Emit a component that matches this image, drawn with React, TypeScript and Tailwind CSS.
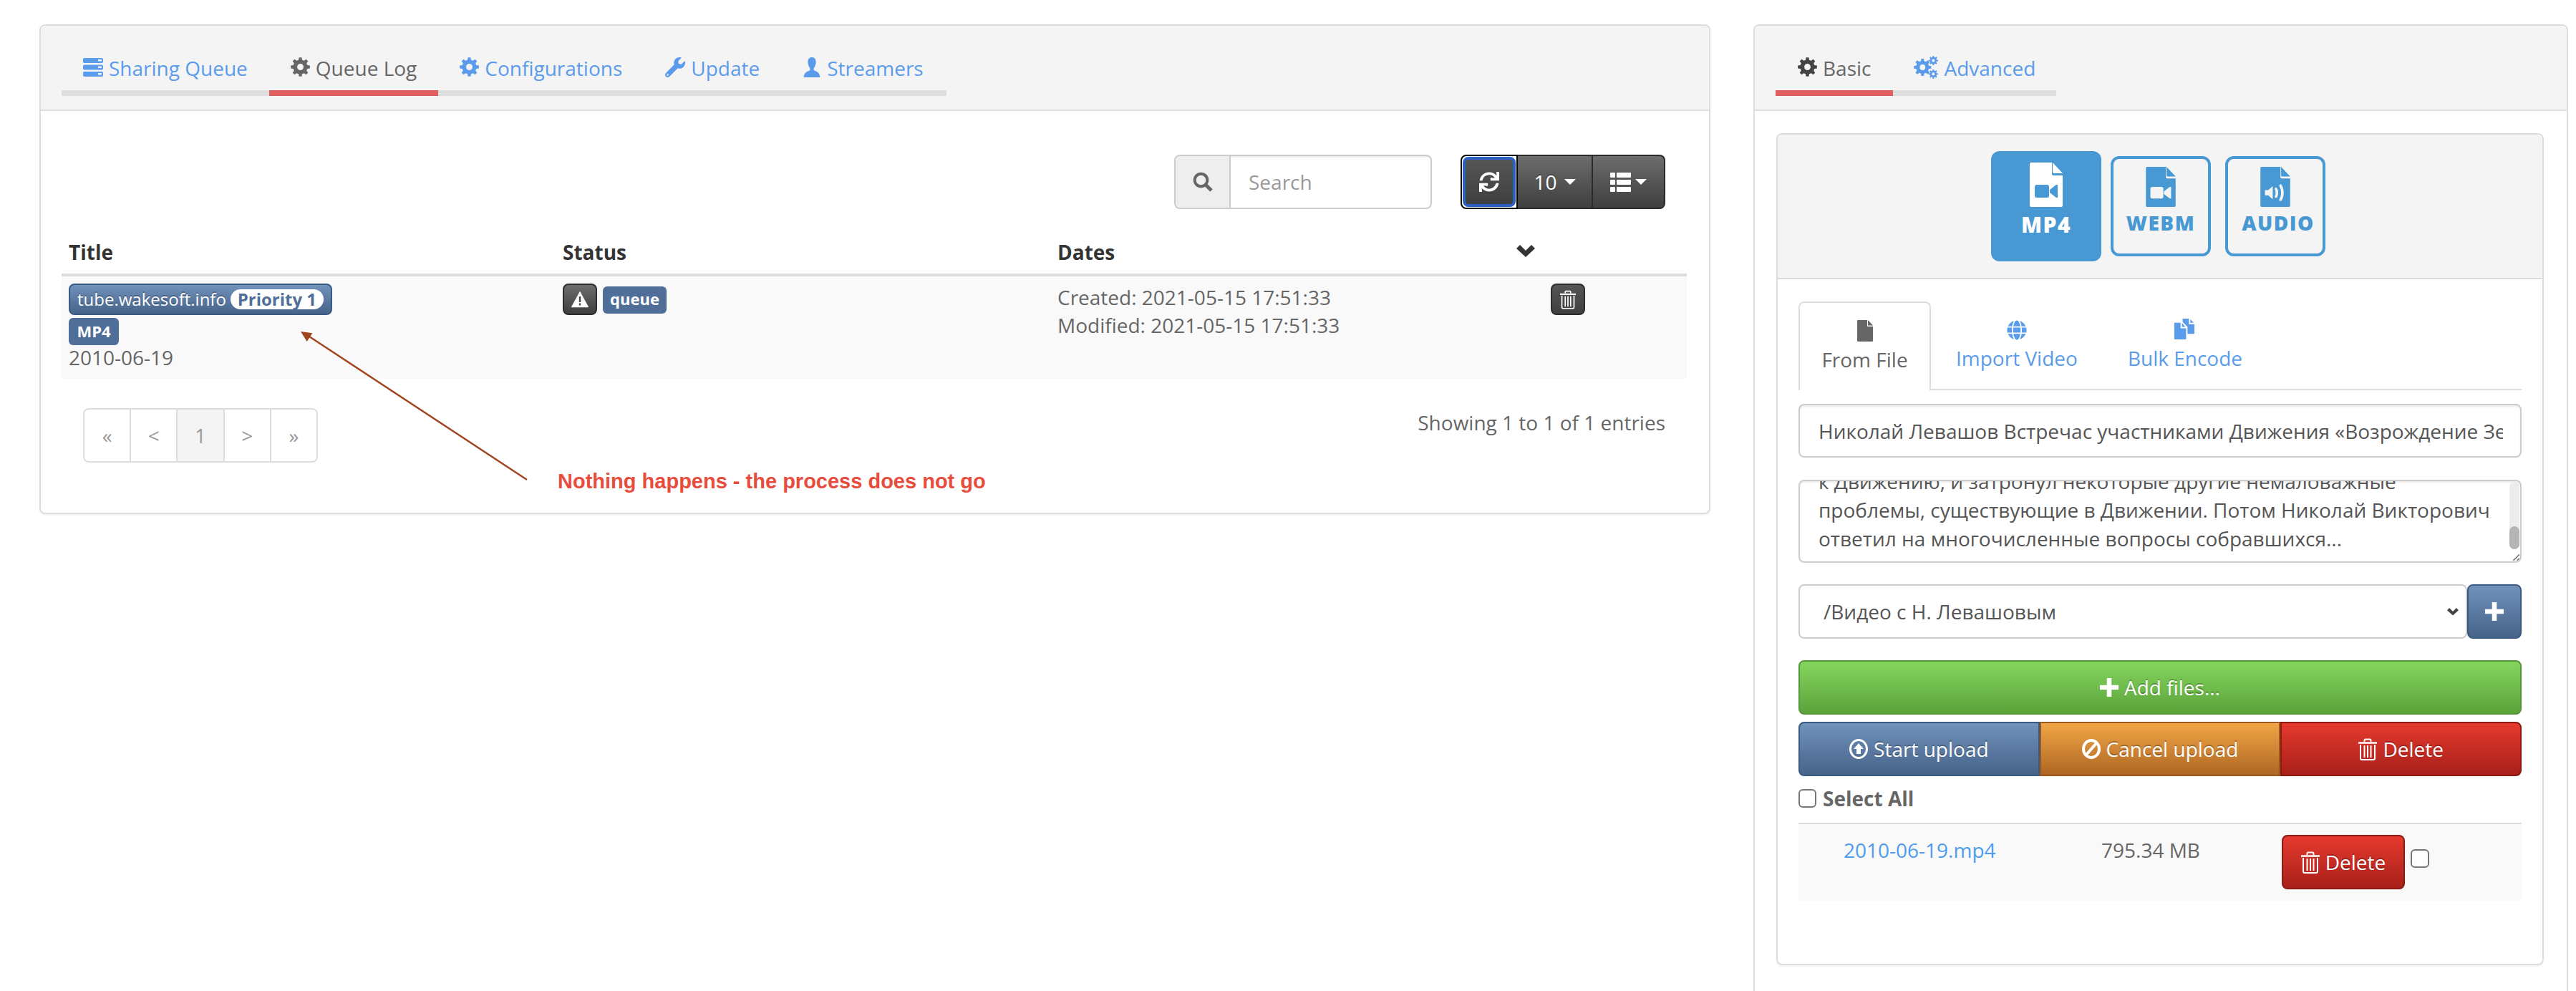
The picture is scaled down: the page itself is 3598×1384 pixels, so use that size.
import React from 'react';
import { FaSync, FaWrench, FaGlobe } from 'react-icons/fa';

// gear outline, computed so cog and cogs share one shape
const gearPath = (cx: number, cy: number, outer: number, root: number, hole: number, teeth = 8) => {
  const pts: string[] = [];
  const step = (Math.PI * 2) / teeth;
  for (let i = 0; i < teeth; i++) {
    const a = i * step - Math.PI / 2;
    const corners: [number, number][] = [
      [root, a - step * 0.32],
      [outer, a - step * 0.18],
      [outer, a + step * 0.18],
      [root, a + step * 0.32],
    ];
    corners.forEach(([r, t]) => pts.push(`${(cx + r * Math.cos(t)).toFixed(2)} ${(cy + r * Math.sin(t)).toFixed(2)}`));
  }
  const ring = `M${cx - hole} ${cy}a${hole} ${hole} 0 1 0 ${hole * 2} 0a${hole} ${hole} 0 1 0 ${-hole * 2} 0z`;
  return `M${pts.join('L')}z${ring}`;
};

const Cog = ({ className }: { className?: string }) => (
  <svg viewBox="0 0 28 28" className={className} fill="currentColor">
    <path fillRule="evenodd" d={gearPath(14, 14, 14, 10.5, 4.6)} />
  </svg>
);

const Cogs = ({ className }: { className?: string }) => (
  <svg viewBox="0 0 36 34" className={className} fill="currentColor">
    <path fillRule="evenodd" d={gearPath(13, 17, 13, 9.6, 4.2)} />
    <path fillRule="evenodd" d={gearPath(29, 7, 7, 5, 2.2)} />
    <path fillRule="evenodd" d={gearPath(29, 27, 7, 5, 2.2)} />
  </svg>
);

const ServerIcon = ({ className }: { className?: string }) => (
  <svg viewBox="0 0 28 26" className={className} fill="currentColor">
    {[0, 9.5, 19].map((y) => (
      <g key={y}>
        <rect x="0" y={y} width="28" height="7" rx="2" />
        <rect x="21" y={y + 2} width="5" height="2.5" fill="#f4f4f4" />
      </g>
    ))}
  </svg>
);

const UserIcon = ({ className }: { className?: string }) => (
  <svg viewBox="0 0 28 32" className={className} fill="currentColor">
    <path d="M14 0c4 0 6.500 3 6.500 7.500 0 4-2 8-3.500 10v3c4 2 9.500 3 10 11.500H1C1.500 23.500 7.500 22.500 11 20.500v-3C9.500 15.500 7.500 11.500 7.500 7.500 7.500 3 10 0 14 0z" />
  </svg>
);

const SearchIcon = ({ className }: { className?: string }) => (
  <svg viewBox="0 0 28 28" className={className} fill="none" stroke="currentColor">
    <circle cx="11.500" cy="11.500" r="8.800" strokeWidth="4" />
    <path d="M18 18l8 8" strokeWidth="5" />
  </svg>
);

const ListIcon = ({ className }: { className?: string }) => (
  <svg viewBox="0 0 29 27" className={className} fill="currentColor">
    {[0, 10, 20].map((y) => (
      <g key={y}>
        <rect x="0" y={y} width="7" height="7" rx="1" />
        <rect x="9" y={y} width="20" height="7" rx="1" />
      </g>
    ))}
  </svg>
);

const ChevronDown = ({ className }: { className?: string }) => (
  <svg viewBox="0 0 26 18" className={className} fill="currentColor">
    <path d="M0 6l5-5 8 8 8-8 5 5-13 12z" />
  </svg>
);

const TrashIcon = ({ className }: { className?: string }) => (
  <svg viewBox="0 0 26 31" className={className} fill="none" stroke="currentColor">
    <path d="M8.500 5V3a1.500 1.500 0 011.500-1.500h6A1.500 1.500 0 0117.500 3v2" strokeWidth="2" />
    <path d="M0 6.500h26" strokeWidth="2.500" />
    <path d="M3 9v19a2 2 0 002 2h16a2 2 0 002-2V9" strokeWidth="2" />
    <path d="M8.500 10v17M13 10v17M17.500 10v17" strokeWidth="2" />
  </svg>
);

const WarningIcon = ({ className }: { className?: string }) => (
  <svg viewBox="0 0 30 28" className={className}>
    <path d="M15 0L30 27a1 1 0 01-1 1H1a1 1 0 01-1-1z" fill="currentColor" />
    <path d="M13.500 9h3v10h-3zM13.500 21h3v3.500h-3z" fill="#444" />
  </svg>
);

const PlusIcon = ({ className }: { className?: string }) => (
  <svg viewBox="0 0 24 24" className={className} fill="currentColor">
    <path d="M9 0h6v9h9v6h-9v9H9v-9H0V9h9z" />
  </svg>
);

const UploadIcon = ({ className }: { className?: string }) => (
  <svg viewBox="0 0 26 28" className={className}>
    <ellipse cx="13" cy="14" rx="11.500" ry="12.500" fill="none" stroke="currentColor" strokeWidth="3" />
    <path d="M13 6l7 8h-4v7h-6v-7H6z" fill="currentColor" />
  </svg>
);

const BanIcon = ({ className }: { className?: string }) => (
  <svg viewBox="0 0 26 28" className={className} fill="none" stroke="currentColor">
    <ellipse cx="13" cy="14" rx="11" ry="12" strokeWidth="4" />
    <path d="M6 22L20 6" strokeWidth="4" />
  </svg>
);

// page with a folded corner, the glyph goes in the lower half
const FileIcon = ({ className, glyph }: { className?: string; glyph?: 'video' | 'audio' }) => (
  <svg viewBox="0 0 46 62" className={className}>
    <path d="M2 0h29v16a2 2 0 002 2h13v42a2 2 0 01-2 2H2a2 2 0 01-2-2V2a2 2 0 012-2z" fill="currentColor" />
    <path d="M32 0l14 15H34a2 2 0 01-2-2z" fill="currentColor" />
    {glyph === 'video' && (
      <path
        d="M10 31h14a3 3 0 013 3v12a3 3 0 01-3 3H10a3 3 0 01-3-3V34a3 3 0 013-3zM28 38l9-7h2v18h-2l-9-7z"
        fill="var(--g)"
      />
    )}
    {glyph === 'audio' && (
      <>
        <path d="M7 36h5l7-6v20l-7-6H7z" fill="var(--g)" />
        <path d="M24 34c2 3 2 9 0 12M31 29c4 6 4 16 0 22" fill="none" stroke="var(--g)" strokeWidth="4" strokeLinecap="round" />
      </>
    )}
  </svg>
);

const PlainFile = ({ className }: { className?: string }) => (
  <svg viewBox="0 0 22 30" className={className} fill="currentColor">
    <path d="M1 0h13v8a1 1 0 001 1h7v20a1 1 0 01-1 1H1a1 1 0 01-1-1V1a1 1 0 011-1z" />
    <path d="M15 0l7 7.500h-7z" />
  </svg>
);

const CopyIcon = ({ className }: { className?: string }) => (
  <svg viewBox="0 0 30 30" className={className} fill="currentColor">
    <path d="M0 6h9v8h8v16H0z" />
    <path d="M11 6l5 6h-5z" />
    <path d="M12 0h9v8h8v14H19V12l-7-7z" />
    <path d="M23 1l5 5h-5z" />
  </svg>
);

const Caret = () => <span className="inline-block w-0 h-0 border-x-[8px] border-t-[8px] border-x-transparent border-t-white" />;

const leftTabs = [
  { label: 'Sharing Queue', icon: <ServerIcon className="w-[28px] h-[26px]" /> },
  { label: 'Queue Log', icon: <Cog className="w-[27px] h-[27px]" />, active: true },
  { label: 'Configurations', icon: <Cog className="w-[27px] h-[27px]" /> },
  { label: 'Update', icon: <FaWrench className="w-[28px] h-[28px]" /> },
  { label: 'Streamers', icon: <UserIcon className="w-[26px] h-[28px]" /> },
];

const Tab = ({ label, icon, active, cls }: { label: string; icon: React.ReactNode; active?: boolean; cls: string }) => (
  <div className={`flex items-center gap-[8px] pb-[11px] border-b-[8px] whitespace-nowrap ${cls} ${active ? 'border-[#e06060] text-[#666]' : 'border-[#ddd] text-[#5a9bec]'}`}>
    <span className="shrink-0 -mt-[3px]">{icon}</span>
    <span className="leading-[40px]">{label}</span>
  </div>
);

const Panel = () => (
  <div className="relative w-[2334px] shrink-0 border-2 border-[#ddd] rounded-lg shadow-[0_2px_2px_rgba(0,0,0,0.05)]">
    <div className="bg-[#f4f4f4] border-b-2 border-[#ddd] rounded-t-lg pt-[39px] pb-[19px] pl-[29px]">
      <div className="flex w-[1236px]">
        {leftTabs.map((t) => (
          <Tab key={t.label} label={t.label} icon={t.icon} active={t.active} cls="px-[30px] last:flex-1" />
        ))}
      </div>
    </div>
    <div className="pt-[61px] pb-[70px]">
      <div className="flex justify-end pr-[61px] gap-[40px]">
        <div className="flex w-[360px] h-[76px] border-2 border-[#ccc] rounded-lg overflow-hidden">
          <div className="w-[77px] shrink-0 bg-[#eee] border-r-2 border-[#ccc] flex items-center justify-center text-[#666]">
            <SearchIcon className="w-[28px] h-[28px]" />
          </div>
          <div className="flex-1 pl-[25px] flex items-center text-[#999] shadow-[inset_0_2px_2px_rgba(0,0,0,0.08)]">Search</div>
        </div>
        <div className="flex h-[76px] w-[286px] text-white [text-shadow:0_-2px_0_rgba(0,0,0,0.25)]">
          <div className="w-[80px] border-2 border-black rounded-l-lg bg-white p-[1px] flex">
            <div className="flex-1 border-[4px] border-[#2a62c4] rounded-lg bg-gradient-to-b from-[#555] to-[#3e3f3f] flex items-center justify-center">
              <FaSync className="w-[28px] h-[28px]" />
            </div>
          </div>
          <div className="w-[105px] border-y-2 border-r-2 border-[#2b2b2b] bg-gradient-to-b from-[#6c6e6c] to-[#3e3f3f] flex items-center justify-center gap-[10px]">
            10 <Caret />
          </div>
          <div className="flex-1 border-y-2 border-r-2 border-[#2b2b2b] rounded-r-lg bg-gradient-to-b from-[#6c6e6c] to-[#3e3f3f] flex items-center justify-center gap-[6px]">
            <ListIcon className="w-[29px] h-[27px]" /> <Caret />
          </div>
        </div>
      </div>

      <div className="ml-[29px] mr-[31px]">
        <div className="grid grid-cols-[690px_691px_631px_1fr] pt-[40px] pb-[10px] border-b-4 border-[#ddd] font-bold text-[#333] leading-[40px]">
          <div className="pl-[10px]">Title</div>
          <div className="pl-[10px]">Status</div>
          <div className="pl-[10px]">Dates</div>
          <div className="pl-[20px] pt-[9px]">
            <ChevronDown className="w-[26px] h-[18px]" />
          </div>
        </div>
        <div className="grid grid-cols-[690px_691px_631px_1fr] bg-[#f9f9f9] pt-[10px] pb-[7px]">
          <div className="pl-[10px]">
            <div className="flex items-center w-[368px] h-[44px] pl-[10px] border-2 border-[#3a5a82] rounded-lg bg-gradient-to-b from-[#7192bb] to-[#476389] text-white text-[24px] [text-shadow:0_-2px_0_rgba(0,0,0,0.25)] whitespace-nowrap">
              tube.wakesoft.info
              <span className="ml-[6px] w-[130px] shrink-0 h-[28px] rounded-full bg-white text-[#4f6f99] text-[24px] font-bold leading-[28px] text-center [text-shadow:none]">Priority 1</span>
            </div>
            <div className="mt-[4px] w-[70px] h-[38px] rounded-md bg-[#4f6f99] text-white text-[22px] font-bold leading-[36px] text-center">MP4</div>
            <div className="-mt-[3px] mb-[3px] leading-[40px]">2010-06-19</div>
          </div>
          <div className="pl-[10px] flex items-start gap-[8px]">
            <div className="w-[48px] h-[44px] border-2 border-[#2b2b2b] rounded-lg bg-gradient-to-b from-[#6c6e6c] to-[#3e3f3f] text-white flex items-center justify-center">
              <WarningIcon className="w-[24px] h-[26px]" />
            </div>
            <div className="mt-[4px] w-[89px] h-[38px] rounded-md bg-[#4f6f99] text-white text-[22px] font-bold leading-[34px] text-center">queue</div>
          </div>
          <div className="pl-[10px] leading-[39px]">
            <div>Created: 2021-05-15 17:51:33</div>
            <div>Modified: 2021-05-15 17:51:33</div>
          </div>
          <div className="pl-[68px]">
            <div className="w-[48px] h-[44px] border-2 border-[#2b2b2b] rounded-lg bg-gradient-to-b from-[#555] to-[#3e3f3f] text-white flex items-center justify-center">
              <TrashIcon className="w-[22px] h-[27px]" />
            </div>
          </div>
        </div>
      </div>

      <div className="flex justify-between items-start mt-[41px] pl-[59px] pr-[61px]">
        <div className="flex h-[76px] w-[328px] border-2 border-[#ddd] rounded-lg overflow-hidden text-[#999]">
          {['«', '<', '1', '>', '»'].map((c, i) => (
            <div key={i} className={`flex-1 flex items-center justify-center ${i > 0 ? 'border-l-2 border-[#ddd]' : ''} ${c === '1' ? 'bg-[#f4f4f4]' : ''}`}>{c}</div>
          ))}
        </div>
        <div className="leading-[40px]">Showing 1 to 1 of 1 entries</div>
      </div>
    </div>

    {/* annotation drawn over the screenshot */}
    <svg className="absolute inset-0 w-full h-full pointer-events-none">
      <line x1="679" y1="634" x2="372" y2="432" stroke="#a0451f" strokeWidth="2.500" />
      <polygon points="363,427 371.700,441.100 379.300,429.300" fill="#a0451f" />
    </svg>
    <div className="absolute left-[722px] top-[616px] font-['Liberation_Sans',Arial,sans-serif] font-bold text-[29px] text-[#e74c3c] leading-[40px] whitespace-nowrap">
      Nothing happens - the process does not go
    </div>
  </div>
);

const FormatButtons = () => (
  <div className="flex items-center justify-center pr-[5px] bg-[#f4f4f4] border-b-2 border-[#ddd] rounded-t-lg pt-[23px] pb-[23px] font-extrabold tracking-[1.5px] text-[#4898d3]">
    <div className="w-[154px] h-[154px] rounded-xl bg-[#4898d3] text-white flex flex-col items-center pt-[16px] [--g:#4898d3]">
      <FileIcon className="w-[46px] h-[62px]" glyph="video" />
      <div className="text-[30px] leading-[48px] mt-[1px]">MP4</div>
    </div>
    <div className="ml-[13px] w-[140px] h-[140px] rounded-xl border-[4px] border-[#4898d3] flex flex-col items-center pt-[11px] [--g:#f4f4f4]">
      <FileIcon className="w-[42px] h-[56px]" glyph="video" />
      <div className="text-[28px] leading-[40px] mt-[2px]">WEBM</div>
    </div>
    <div className="ml-[20px] w-[140px] h-[140px] rounded-xl border-[4px] border-[#4898d3] flex flex-col items-center pt-[11px] [--g:#f4f4f4]">
      <FileIcon className="w-[42px] h-[56px]" glyph="audio" />
      <div className="text-[28px] leading-[40px] mt-[2px] pl-[8px]">AUDIO</div>
    </div>
  </div>
);

const GradientBtn = ({ cls, children }: { cls: string; children: React.ReactNode }) => (
  <div className={`flex items-center justify-center gap-[8px] h-[76px] border-2 text-white [text-shadow:0_-2px_0_rgba(0,0,0,0.25)] ${cls}`}>{children}</div>
);

const UploadForm = () => (
  <div className="pt-[31px] px-[29px] pb-[88px]">
    <div className="flex border-b-2 border-[#ddd] h-[124px]">
      <div className="w-[185px] h-[124px] border-2 border-b-0 border-[#ddd] rounded-t-lg bg-white text-center text-[#666] pt-[24px]">
        <PlainFile className="w-[22px] h-[30px] mx-auto" />
        <div className="leading-[40px] mt-[5px]">From File</div>
      </div>
      <div className="px-[35px] text-center text-[#5a9bec] pt-[26px]">
        <FaGlobe className="w-[28px] h-[28px] mx-auto" />
        <div className="leading-[40px] mt-[5px] whitespace-nowrap">Import Video</div>
      </div>
      <div className="px-[35px] text-center text-[#5a9bec] pt-[24px]">
        <CopyIcon className="w-[29px] h-[29px] mx-auto" />
        <div className="leading-[40px] mt-[6px] whitespace-nowrap">Bulk Encode</div>
      </div>
    </div>

    <input
      readOnly
      value="Николай Левашов Встречас участниками Движения «Возрождение Земли»"
      className="mt-[19px] block w-[1010px] h-[75px] border-2 border-[#ccc] rounded-lg pl-[26px] pr-[24px] text-[#555] outline-none shadow-[inset_0_2px_2px_rgba(0,0,0,0.08)]"
    />

    <div className="relative mt-[31px] h-[116px] border-2 border-[#ccc] rounded-lg pl-[26px] overflow-hidden leading-[40px] whitespace-nowrap text-[#555] shadow-[inset_0_2px_2px_rgba(0,0,0,0.08)]">
      <div className="-mt-[20px]">к Движению, и затронул некоторые другие немаловажные</div>
      <div>проблемы, существующие в Движении. Потом Николай Викторович</div>
      <div>ответил на многочисленные вопросы собравшихся...</div>
      <div className="absolute right-[1px] top-[1px] bottom-[17px] w-[14px] rounded-full bg-[#ececec]">
        <div className="absolute left-0 right-0 bottom-0 h-[32px] rounded-full bg-[#b5b5b5]" />
      </div>
      <svg viewBox="0 0 14 14" className="absolute right-0 bottom-0 w-[15px] h-[15px] bg-white">
        <path d="M13 5L5 13M13 10l-3 3" stroke="#777" strokeWidth="1.500" />
      </svg>
    </div>

    <div className="mt-[30px] flex h-[76px]">
      <div className="relative flex-1">
        <select className="appearance-none block w-full h-full bg-white border-2 border-[#ccc] rounded-lg pl-[33px] text-[#555] outline-none">
          <option>/Видео с Н. Левашовым</option>
        </select>
        <ChevronDown className="absolute right-[12px] top-[32px] w-[16px] h-[12px] text-[#444]" />
      </div>
      <GradientBtn cls="w-[76px] rounded-lg border-[#3a5a82] bg-gradient-to-b from-[#7192bb] to-[#476389]">
        <PlusIcon className="w-[26px] h-[26px]" />
      </GradientBtn>
    </div>

    <GradientBtn cls="mt-[30px] rounded-lg border-[#55963a] bg-gradient-to-b from-[#85d55f] to-[#5ba33a]">
      <PlusIcon className="w-[26px] h-[26px]" />
      Add files...
    </GradientBtn>

    <div className="mt-[10px] grid grid-cols-3">
      <GradientBtn cls="rounded-l-lg border-[#3a5a82] bg-gradient-to-b from-[#7192bb] to-[#476389]">
        <UploadIcon className="w-[26px] h-[28px]" />
        Start upload
      </GradientBtn>
      <GradientBtn cls="border-[#9a5a1e] bg-gradient-to-b from-[#f2a646] to-[#ae6723]">
        <BanIcon className="w-[26px] h-[28px]" />
        Cancel upload
      </GradientBtn>
      <GradientBtn cls="rounded-r-lg border-[#8e1a14] bg-gradient-to-b from-[#e63a2e] to-[#a8201a]">
        <TrashIcon className="w-[26px] h-[31px]" />
        Delete
      </GradientBtn>
    </div>

    <div className="mt-[18px] flex items-center gap-[9px] h-[26px] font-bold text-[#666] leading-[40px]">
      <span className="w-[25px] h-[26px] border-2 border-[#767676] rounded-md bg-white" />
      Select All
    </div>

    <div className="mt-[21px] border-t-2 border-[#ddd] bg-[#f9f9f9] h-[109px] flex items-start">
      <div className="ml-[63px] w-[360px] mt-[16px] leading-[40px] text-[#4f9bf0]">2010-06-19.mp4</div>
      <div className="w-[252px] mt-[16px] leading-[40px]">795.34 MB</div>
      <GradientBtn cls="mt-[15px] w-[172px] rounded-lg border-[#8e1a14] bg-gradient-to-b from-[#e63a2e] to-[#a8201a]">
        <TrashIcon className="w-[26px] h-[31px]" />
        Delete
      </GradientBtn>
      <span className="ml-[8px] mt-[35px] w-[26px] h-[26px] border-2 border-[#767676] rounded-md bg-white" />
    </div>
  </div>
);

export default function App() {
  return (
    <div className="h-[1384px] overflow-hidden bg-white flex items-start pl-[55px] pt-[34px] font-['Open_Sans',sans-serif] text-[28px] text-[#666]">
      <Panel />
      <div className="ml-[60px] w-[1138px] h-[1400px] shrink-0 border-2 border-[#ddd] rounded-t-lg">
        <div className="bg-[#f4f4f4] border-b-2 border-[#ddd] rounded-t-lg pt-[39px] pb-[19px] pl-[29px]">
          <div className="flex">
            <Tab label="Basic" icon={<Cog className="w-[27px] h-[27px] text-[#444]" />} active cls="px-[31px]" />
            <Tab label="Advanced" icon={<Cogs className="w-[34px] h-[32px]" />} cls="px-[29px]" />
          </div>
        </div>
        <div className="ml-[30px] mr-[32px] mt-[31px] border-2 border-[#ddd] rounded-lg shadow-[0_2px_2px_rgba(0,0,0,0.05)]">
          <FormatButtons />
          <UploadForm />
        </div>
      </div>
    </div>
  );
}
